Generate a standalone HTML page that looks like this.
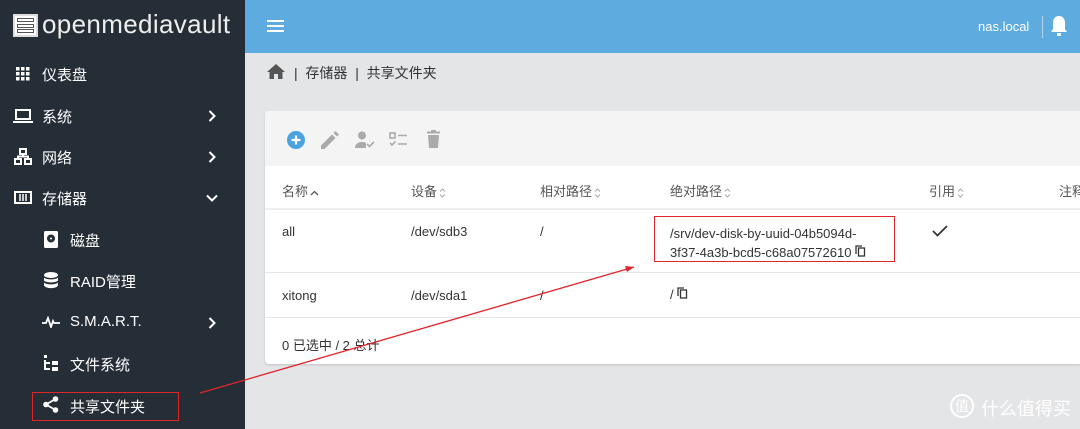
<!DOCTYPE html>
<html><head><meta charset="utf-8"><style>
*{margin:0;padding:0;box-sizing:border-box}
body{width:1080px;height:429px;overflow:hidden;background:#e4e5e7;font-family:"Liberation Sans","Noto Sans CJK SC",sans-serif;position:relative}
#side{position:absolute;left:0;top:0;width:245px;height:429px;background:#252d37;color:#fff}
.logo{position:absolute;left:13px;top:9px;font-size:26px;color:#eee;white-space:nowrap}
.logo .box{position:absolute;left:0;top:5px;width:25px;height:23px;border:2px solid #ddd;background:#fff}
.item{position:absolute;left:0;width:245px;font-size:15px;color:#fff;height:20px}
.item svg{position:absolute}
.item span{position:absolute;white-space:nowrap}
.chev{position:absolute;left:208px;top:4px}
#top{position:absolute;left:245px;top:0;width:835px;height:53px;background:#5eabdf}
.card{position:absolute;left:265px;top:111px;width:815px;height:253px;background:#fff;border-radius:4px 0 0 4px;box-shadow:0 1px 2px rgba(0,0,0,.15)}
.tb{height:55px;background:#f4f4f4;border-radius:4px 0 0 0}
.t{position:absolute;font-size:13px;color:#333;white-space:nowrap}
.h{color:#555}
.line{position:absolute;left:0;width:815px;height:1px;background:#e6e6e6}
.srt{display:inline-block;vertical-align:middle;margin-left:2px}
</style></head><body>
<div id="side">
 <div class="logo"><div class="box"><div style="margin:2px 2px;height:4px;border:1px solid #555;"></div><div style="margin:1px 2px;height:4px;border:1px solid #555"></div><div style="margin:1px 2px;height:4px;border:1px solid #555"></div></div><span style="margin-left:29px;letter-spacing:0.35px">openmediavault</span></div>
 <div class="item" style="top:64px">
  <svg style="left:16px;top:3px" width="14" height="14" viewBox="0 0 14 14" fill="#fff"><rect x="0" y="0" width="3.5" height="3.5"/><rect x="5" y="0" width="3.5" height="3.5"/><rect x="10" y="0" width="3.5" height="3.5"/><rect x="0" y="5" width="3.5" height="3.5"/><rect x="5" y="5" width="3.5" height="3.5"/><rect x="10" y="5" width="3.5" height="3.5"/><rect x="0" y="10" width="3.5" height="3.5"/><rect x="5" y="10" width="3.5" height="3.5"/><rect x="10" y="10" width="3.5" height="3.5"/></svg>
  <span style="left:42px">仪表盘</span></div>
 <div class="item" style="top:106px">
  <svg style="left:13px;top:2px" width="20" height="16" viewBox="0 0 20 16" fill="none" stroke="#fff" stroke-width="2"><rect x="3" y="2" width="14" height="9"/><path d="M0 14h20"/></svg>
  <span style="left:42px">系统</span><svg class="chev" width="8" height="12" viewBox="0 0 8 12"><path d="M1.5 1l5 5-5 5" stroke="#fff" stroke-width="2" fill="none"/></svg></div>
 <div class="item" style="top:147px">
  <svg style="left:14px;top:1px" width="18" height="17" viewBox="0 0 18 17" fill="none" stroke="#fff" stroke-width="2"><rect x="6" y="1" width="6" height="5"/><rect x="1" y="11" width="6" height="5"/><rect x="11" y="11" width="6" height="5"/><path d="M9 6v2.5M4 11V8.5h10V11"/></svg>
  <span style="left:42px">网络</span><svg class="chev" width="8" height="12" viewBox="0 0 8 12"><path d="M1.5 1l5 5-5 5" stroke="#fff" stroke-width="2" fill="none"/></svg></div>
 <div class="item" style="top:188px">
  <svg style="left:14px;top:3px" width="18" height="13" viewBox="0 0 18 13"><rect x="1" y="1" width="16" height="11" fill="none" stroke="#fff" stroke-width="2"/><path d="M6 3v7M9 3v7M12 3v7" stroke="#fff" stroke-width="1.5"/></svg>
  <span style="left:42px">存储器</span><svg class="chev" style="left:206px;top:6px" width="12" height="8" viewBox="0 0 12 8"><path d="M1 1.5l5 5 5-5" stroke="#fff" stroke-width="2" fill="none"/></svg></div>
 <div class="item" style="top:230px">
  <svg style="left:44px;top:1px" width="14" height="17" viewBox="0 0 14 17"><rect width="14" height="17" rx="1.5" fill="#fff"/><circle cx="7" cy="7.5" r="4" fill="#252d37"/><circle cx="7" cy="7.5" r="1" fill="#fff"/></svg>
  <span style="left:70px">磁盘</span></div>
 <div class="item" style="top:271px">
  <svg style="left:44px;top:1px" width="14" height="17" viewBox="0 0 14 17" fill="#fff"><ellipse cx="7" cy="3" rx="7" ry="3"/><path d="M0 5.5c2 2.5 12 2.5 14 0v3c-2 2.5-12 2.5-14 0zM0 10.5c2 2.5 12 2.5 14 0v3c-2 3.5-12 3.5-14 0z"/></svg>
  <span style="left:70px">RAID管理</span></div>
 <div class="item" style="top:313px">
  <svg style="left:42px;top:3px" width="18" height="12" viewBox="0 0 18 12" fill="none" stroke="#fff" stroke-width="1.8"><path d="M0 7h4l2-5 3 9 2-6 1 2h6"/></svg>
  <span style="left:70px">S.M.A.R.T.</span><svg class="chev" width="8" height="12" viewBox="0 0 8 12"><path d="M1.5 1l5 5-5 5" stroke="#fff" stroke-width="2" fill="none"/></svg></div>
 <div class="item" style="top:354px">
  <svg style="left:44px;top:1px" width="14" height="16" viewBox="0 0 14 16" fill="#fff"><rect x="0" y="0" width="3" height="3"/><rect x="0" y="5" width="2" height="10"/><rect x="0" y="7" width="6" height="2"/><rect x="0" y="13" width="6" height="2"/><rect x="8" y="6" width="6" height="4"/><rect x="8" y="12" width="6" height="4"/></svg>
  <span style="left:70px">文件系统</span></div>
 <div class="item" style="top:396px">
  <svg style="left:43px;top:0px" width="16" height="17" viewBox="0 0 16 17" fill="#fff"><circle cx="12.5" cy="3" r="2.8"/><circle cx="3" cy="8.5" r="2.8"/><circle cx="12.5" cy="14" r="2.8"/><path d="M3 8.5l9.5-5.5M3 8.5l9.5 5.5" stroke="#fff" stroke-width="1.6"/></svg>
  <span style="left:70px">共享文件夹</span></div>
</div>
<div style="position:absolute;left:32px;top:392px;width:147px;height:29px;border:1.5px solid #e0252b"></div>
<div id="top">
 <div style="position:absolute;left:22px;top:20px;width:17px;height:2px;background:#fff;box-shadow:0 5px 0 #fff,0 10px 0 #fff"></div>
 <div style="position:absolute;left:733px;top:19px;color:#fff;font-size:13px">nas.local</div>
 <div style="position:absolute;left:797px;top:16px;width:1px;height:22px;background:rgba(255,255,255,.5)"></div>
 <svg style="position:absolute;left:806px;top:15px" width="16" height="22" viewBox="0 0 16 22" fill="#fff"><path d="M8 1c-4 0-6 3-6 7v6l-2 3h16l-2-3V8c0-4-2-7-6-7z"/><rect x="6" y="18" width="4" height="3" rx="1"/></svg>
</div>
<svg style="position:absolute;left:267px;top:64px" width="18" height="15" viewBox="0 0 18 15" fill="#555"><path d="M9 0L0 8h2.5v7H7v-5h4v5h4.5V8H18z"/></svg>
<div style="position:absolute;left:294px;top:63px;font-size:14px;color:#333">|&nbsp; 存储器 &nbsp;|&nbsp; 共享文件夹</div>
<div class="card">
 <div class="tb"></div>
 <svg style="position:absolute;left:22px;top:20px" width="18" height="18" viewBox="0 0 18 18"><circle cx="9" cy="9" r="9" fill="#4aa3df"/><path d="M9 4.5v9M4.5 9h9" stroke="#fff" stroke-width="2.2"/></svg>
 <svg style="position:absolute;left:56px;top:20px" width="18" height="18" viewBox="0 0 18 18" fill="#aaa"><path d="M0 18v-3.5L11 3.5 14.5 7 3.5 18zM12.5 2L14.5 0 18 3.5 16 5.5z"/></svg>
 <svg style="position:absolute;left:90px;top:20px" width="20" height="18" viewBox="0 0 20 18" fill="#aaa"><circle cx="7" cy="4.5" r="4"/><path d="M0 17c0-4 3-6 7-6 2 0 3 .3 4 1v5z"/><path d="M12 13l2.5 2.5L19 11" stroke="#aaa" stroke-width="1.6" fill="none"/></svg>
 <svg style="position:absolute;left:124px;top:21px" width="18" height="16" viewBox="0 0 18 16" fill="none" stroke="#aaa" stroke-width="1.6"><rect x="1" y="1" width="5" height="5"/><path d="M9 3.5h9M9 12h9M1 11l2 2 3.5-3.5"/></svg>
 <svg style="position:absolute;left:162px;top:19px" width="13" height="18" viewBox="0 0 13 18" fill="#aaa"><rect x="0" y="1.5" width="13" height="2"/><rect x="4" y="0" width="5" height="2"/><path d="M1 5h11l-1 13H2z"/></svg>
 <div class="t h" style="left:17px;top:70px">名称<svg class="srt" width="9" height="6" viewBox="0 0 9 6"><path d="M1 5l3.5-3.5L8 5" stroke="#555" stroke-width="1.3" fill="none"/></svg></div>
 <div class="t h" style="left:146px;top:70px">设备<svg class="srt" width="7" height="10" viewBox="0 0 7 10"><path d="M1 3.5l2.5-2.5L6 3.5M1 6.5L3.5 9 6 6.5" stroke="#aaa" fill="none"/></svg></div>
 <div class="t h" style="left:275px;top:70px">相对路径<svg class="srt" width="7" height="10" viewBox="0 0 7 10"><path d="M1 3.5l2.5-2.5L6 3.5M1 6.5L3.5 9 6 6.5" stroke="#aaa" fill="none"/></svg></div>
 <div class="t h" style="left:405px;top:70px">绝对路径<svg class="srt" width="7" height="10" viewBox="0 0 7 10"><path d="M1 3.5l2.5-2.5L6 3.5M1 6.5L3.5 9 6 6.5" stroke="#aaa" fill="none"/></svg></div>
 <div class="t h" style="left:664px;top:70px">引用<svg class="srt" width="7" height="10" viewBox="0 0 7 10"><path d="M1 3.5l2.5-2.5L6 3.5M1 6.5L3.5 9 6 6.5" stroke="#aaa" fill="none"/></svg></div>
 <div class="t h" style="left:794px;top:70px">注释</div>
 <div class="line" style="top:97px;height:2px;background:#eee"></div>
 <div class="t" style="left:17px;top:113px">all</div>
 <div class="t" style="left:146px;top:113px">/dev/sdb3</div>
 <div class="t" style="left:275px;top:113px">/</div>
 <div class="t" style="left:405px;top:113px;line-height:19px">/srv/dev-disk-by-uuid-04b5094d-<br>3f37-4a3b-bcd5-c68a07572610 <svg width="11" height="12" viewBox="0 0 11 12" fill="none" stroke="#333" stroke-width="1.3"><path d="M1 9V1h6"/><rect x="3.5" y="3" width="6" height="8"/></svg></div>
 <svg style="position:absolute;left:667px;top:114px" width="16" height="12" viewBox="0 0 16 12"><path d="M1 6l4.5 4.5L15 1" stroke="#333" stroke-width="1.8" fill="none"/></svg>
 <div class="line" style="top:161px"></div>
 <div class="t" style="left:17px;top:177px">xitong</div>
 <div class="t" style="left:146px;top:177px">/dev/sda1</div>
 <div class="t" style="left:275px;top:177px">/</div>
 <div class="t" style="left:405px;top:176px">/ <svg width="11" height="12" viewBox="0 0 11 12" fill="none" stroke="#333" stroke-width="1.3"><path d="M1 9V1h6"/><rect x="3.5" y="3" width="6" height="8"/></svg></div>
 <div class="line" style="top:206px"></div>
 <div class="t" style="left:17px;top:224px">0 已选中 / 2 总计</div>
</div>
<div style="position:absolute;left:654px;top:216px;width:241px;height:46px;border:1.5px solid #e0252b"></div>
<svg style="position:absolute;left:0;top:0" width="1080" height="429"><path d="M200 393L634 267" stroke="#e0252b" stroke-width="1.3"/><path d="M634 267l-9 -1 2 6z" fill="#e0252b"/></svg>
<div style="position:absolute;left:950px;top:394px;width:24px;height:24px;border-radius:50%;border:2px solid #fff;color:#fff;font-size:14px;text-align:center;line-height:20px">值</div>
<div style="position:absolute;left:981px;top:395px;color:#fff;font-size:18px">什么值得买</div>
</body></html>
